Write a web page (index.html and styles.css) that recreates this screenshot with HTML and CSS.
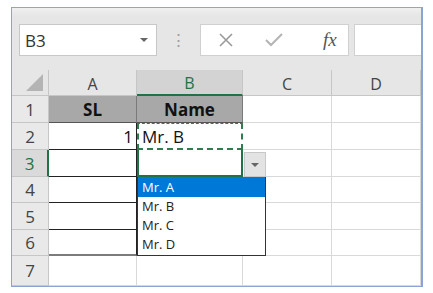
FILE: index.html
```html
<!DOCTYPE html>
<html lang="en">
<head>
  <meta charset="UTF-8">
  <title>Data validation list</title>
  <link rel="stylesheet" href="styles.css">
</head>
<body>

  <div class="frame">

    <!-- Name box + formula bar -->
    <div class="toolbar">
      <div class="namebox">
        <span>B3</span>
        <span class="caret"></span>
      </div>
      <div class="dots">⋮</div>
      <div class="fbuttons">
        <svg class="icon" width="18" height="18" viewBox="0 0 18 18"><path d="M3 3 L15 15 M15 3 L3 15" stroke="#9a9a9a" stroke-width="1.6" fill="none"/></svg>
        <svg class="icon" width="20" height="18" viewBox="0 0 20 18"><path d="M2 9 L7 14 L18 3" stroke="#b4b4b4" stroke-width="2" fill="none"/></svg>
        <span class="fx">fx</span>
      </div>
      <div class="formula"></div>
    </div>

    <!-- Sheet grid -->
    <div class="sheet">
      <div class="hd corner"><span class="tri"></span></div>
      <div class="hd col">A</div>
      <div class="hd col sel">B</div>
      <div class="hd col">C</div>
      <div class="hd col">D</div>

      <div class="hd row">1</div>
      <div class="cell head">SL</div>
      <div class="cell head">Name</div>
      <div class="cell"></div>
      <div class="cell"></div>

      <div class="hd row">2</div>
      <div class="cell tb num">1</div>
      <div class="cell copy">Mr. B</div>
      <div class="cell"></div>
      <div class="cell"></div>

      <div class="hd row sel">3</div>
      <div class="cell tb"></div>
      <div class="cell active"></div>
      <div class="cell"></div>
      <div class="cell"></div>

      <div class="hd row">4</div>
      <div class="cell tb"></div>
      <div class="cell"></div>
      <div class="cell"></div>
      <div class="cell"></div>

      <div class="hd row">5</div>
      <div class="cell tb"></div>
      <div class="cell"></div>
      <div class="cell"></div>
      <div class="cell"></div>

      <div class="hd row">6</div>
      <div class="cell tb last"></div>
      <div class="cell last"></div>
      <div class="cell"></div>
      <div class="cell"></div>

      <div class="hd row">7</div>
      <div class="cell"></div>
      <div class="cell"></div>
      <div class="cell"></div>
      <div class="cell"></div>

      <!-- validation dropdown -->
      <div class="dropbtn"><span class="caret"></span></div>
      <ul class="droplist">
        <li class="hi">Mr. A</li>
        <li>Mr. B</li>
        <li>Mr. C</li>
        <li>Mr. D</li>
      </ul>
    </div>

  </div>

</body>
</html>
```

FILE: styles.css
```css
body { margin: 0; background: #fff; font-family: "Open Sans", "Noto Sans", sans-serif; }

.frame { margin: 7px 0 0 11px; width: 412px; height: 280px; box-sizing: border-box; border: 1px solid #8da3d6; border-right-width: 2px; background: #e6e6e6; overflow: hidden; display: flex; flex-direction: column; }

.toolbar { height: 62px; display: flex; align-items: flex-start; padding: 16px 0 0 7px; box-sizing: border-box; background: linear-gradient(#f0f0f0, #e6e6e6 8px); }
.namebox { width: 138px; height: 32px; box-sizing: border-box; background: #fff; border: 1px solid #c8c8c8; display: flex; align-items: center; justify-content: space-between; padding: 0 8px 0 5px; font-size: 17px; color: #333; }
.caret { width: 0; height: 0; border-left: 4px solid transparent; border-right: 4px solid transparent; border-top: 4px solid #666; }
.dots { width: 43px; text-align: center; color: #a0a0a0; font-size: 17px; line-height: 32px; }
.fbuttons { width: 149px; height: 32px; box-sizing: border-box; background: #fff; border: 1px solid #d0d0d0; display: flex; align-items: center; padding-left: 16px; gap: 29px; }
.fx { font-family: "Liberation Serif", serif; font-style: italic; font-size: 19px; color: #555; margin-left: 10px; }
.formula { flex: 1; height: 32px; margin-left: 5px; box-sizing: border-box; background: #fff; border: 1px solid #d0d0d0; border-right: 0; }

.sheet { position: relative; flex: 1; display: grid; grid-template-columns: 37px 88px 106px 89px 1fr; grid-template-rows: 26px 27px 27px 27px 26px 27px 26px 1fr; background: #fff; }

.hd { background: #e6e6e6; color: #444; font-size: 16px; display: flex; align-items: center; justify-content: center; box-sizing: border-box; border-right: 1px solid #c6c6c6; border-bottom: 1px solid #c6c6c6; }
.hd.col { padding-top: 2px; }
.hd.row { font-size: 17px; background: #e9e9e9; }
.hd.sel { background: #d3d3d3; color: #217346; }
.hd.col.sel { border-bottom: 2px solid #217346; }
.hd.row.sel { border-right: 2px solid #217346; background: #dadada; }
.corner { align-items: flex-end; justify-content: flex-end; padding: 0 5px 4px 0; }
.tri { width: 0; height: 0; border-left: 17px solid transparent; border-bottom: 17px solid #b4b4b4; }

.cell { box-sizing: border-box; border-right: 1px solid #d9d9d9; border-bottom: 1px solid #d9d9d9; font-size: 17px; color: #111; display: flex; align-items: center; padding: 0 3px; }
.cell.head { background: #a8a8a8; font-weight: bold; justify-content: center; border-right: 1px solid #7a7a7a; border-bottom: 1px solid #555; }
.cell.tb { border-right: 1px solid #222; border-bottom: 1px solid #222; }
.cell.num { justify-content: flex-end; }
.cell.copy { border: 2px dashed #2e7d4f; border-top-width: 1px; }
.cell.active { border: 2px solid #217346; border-top: 0; }
.cell.last { border-bottom: 2px solid #7c7c7c; }

.dropbtn { position: absolute; left: 232px; top: 82px; width: 22px; height: 25px; box-sizing: border-box; background: #e3e3e3; border: 1px solid #c8c8c8; display: flex; align-items: center; justify-content: center; }

.droplist { position: absolute; left: 125px; top: 107px; width: 129px; height: 79px; box-sizing: border-box; margin: 0; padding: 0; list-style: none; background: #fff; border: 1px solid #333; border-top: 0; font-size: 13px; color: #222; }
.droplist li { height: 19px; line-height: 19px; padding-left: 4px; }
.droplist li.hi { background: #0078d7; color: #fff; height: 20px; line-height: 20px; }
```
